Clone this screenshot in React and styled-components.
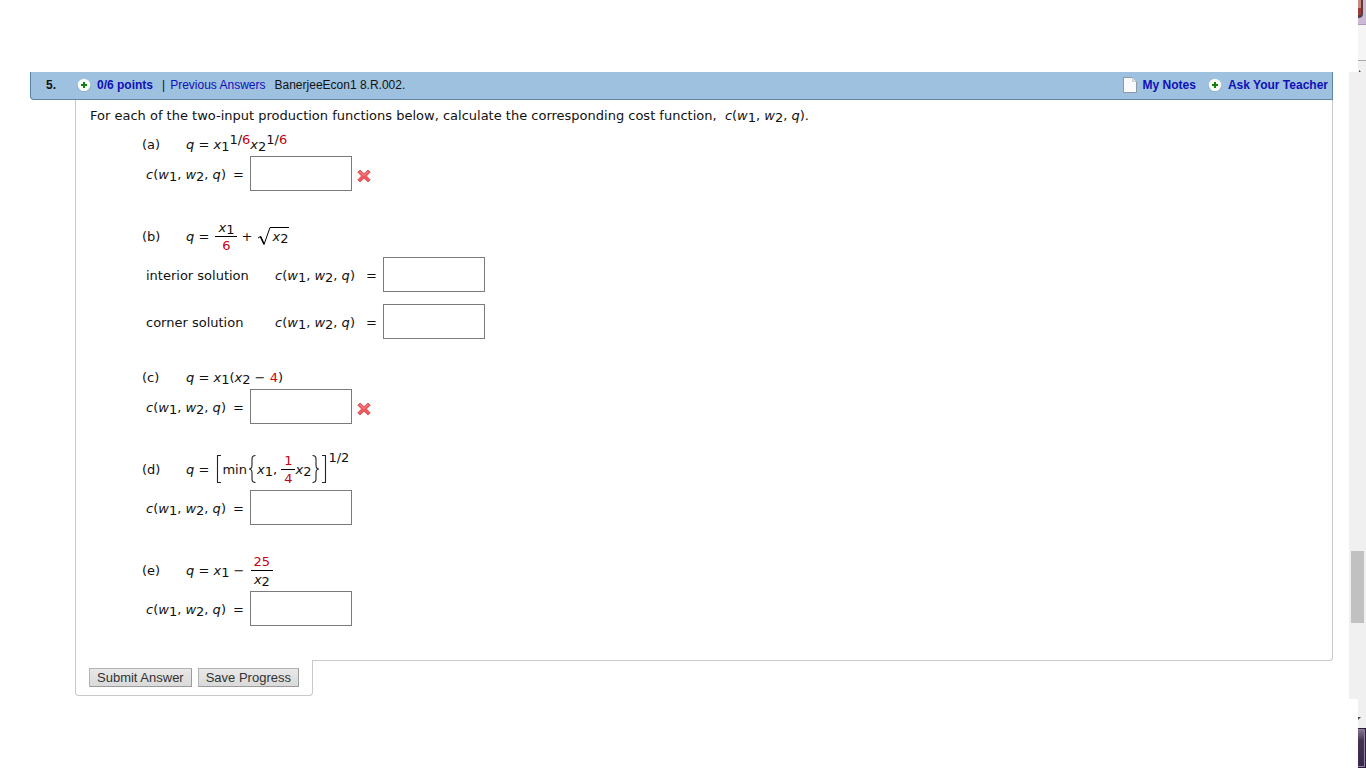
import { useState } from 'react';
import styled, { createGlobalStyle } from 'styled-components';

const GlobalStyle = createGlobalStyle`
  * {
    box-sizing: border-box;
  }
  body {
    margin: 0;
    background: #fff;
    color: #111;
    font-family: 'DejaVu Sans', Verdana, sans-serif;
    font-size: 13px;
  }
`;

const Page = styled.div`
  display: flex;
  flex-direction: column;
  min-height: 100vh;
`;

const EdgeRow = styled.div`
  display: flex;
  justify-content: flex-end;
  height: ${({ $height }) => $height}px;
`;

const Middle = styled.div`
  display: flex;
  gap: 16px;
  padding-left: 30px;
`;

const Question = styled.main`
  flex: 1;
  min-width: 0;
  padding-bottom: 3px;
`;

const Track = styled.div`
  width: 17px;
  padding: 479px 2px 0;
  background: #f0f0f0;
`;

const Thumb = styled.div`
  height: 72px;
  background: #c1c1c1;
`;

const Header = styled.header`
  display: flex;
  align-items: center;
  height: 28px;
  padding: 0 4px 2px 15px;
  background: #9dc1df;
  border: 1px solid #5d86a6;
  border-top: 0;
  border-bottom-left-radius: 4px;
  font-family: 'Liberation Sans', Arial, sans-serif;
  font-size: 12px;
  white-space: pre;
`;

const Number = styled.b`
  width: 31px;
`;

const HeaderLink = styled.a`
  color: #1010b8;
  font-weight: ${({ $bold }) => ($bold ? 'bold' : 'normal')};
  text-decoration: none;
`;

const HeaderItem = styled.span`
  display: flex;
  align-items: center;
  gap: 6px;
`;

const HeaderTools = styled.div`
  display: flex;
  gap: 12px;
  margin-left: auto;
`;

const Divider = styled.span`
  margin: 0 5px 0 9px;
`;

const Source = styled.span`
  margin-left: 9px;
`;

const Body = styled.section`
  margin-left: 45px;
  padding: 0 14px 34px;
  border: 1px solid #c8c8c8;
  border-top: 0;
  border-bottom-right-radius: 4px;
`;

const Prompt = styled.p`
  margin: 0;
  line-height: 32px;
`;

const Part = styled.div`
  margin: 0 0 26px 52px;
  &:last-child {
    margin-bottom: 0;
  }
`;

const Formula = styled.div`
  display: flex;
  align-items: center;
  height: ${({ $tall }) => ($tall ? 38 : 24)}px;
  margin-bottom: ${({ $tall }) => ($tall ? 2 : 0)}px;
  white-space: pre;
`;

const PartLabel = styled.span`
  width: 44px;
`;

const LeftSide = styled.span`
  padding-right: 2px;
`;

const Field = styled.div`
  display: flex;
  align-items: center;
  padding-left: 4px;
  & + & {
    margin-top: 12px;
  }
`;

const FieldLabel = styled.label`
  display: flex;
  padding-top: 2px;
  white-space: pre;
`;

const FieldName = styled.span`
  width: 129px;
`;

const FieldMath = styled.span`
  display: flex;
  justify-content: space-between;
  width: ${({ $wide }) => ($wide ? 102 : 98)}px;
  margin-right: 6px;
`;

const Answer = styled.input`
  width: 102px;
  height: 35px;
  margin-right: 5px;
  padding: 0 6px;
  border: 1px solid #7b7b7b;
  background: #fff;
  font: inherit;
`;

const Sub = styled.sub`
  font-size: 13px;
  line-height: 0;
  vertical-align: -2px;
`;

const Sup = styled.sup`
  font-size: 13px;
  line-height: 0;
  vertical-align: 5px;
`;

const Red = styled.span`
  color: #c9000e;
`;

const Fraction = styled.span`
  display: inline-flex;
  flex-direction: column;
  align-items: center;
  line-height: 17px;
`;

const Numerator = styled.span`
  padding: 0 3px;
  border-bottom: 1px solid #000;
`;

const Root = styled.span`
  display: inline-flex;
  align-items: center;
`;

const Radicand = styled.span`
  padding-left: 2px;
  border-top: 1px solid #000;
  line-height: 18px;
`;

const Exponent = styled.span`
  align-self: flex-start;
`;

const BracketIcon = styled.svg`
  margin: 0 1px;
`;

const Mark = styled.svg`
  margin-top: 4px;
`;

const Footer = styled.footer`
  display: flex;
  margin: -1px 0 0 45px;
`;

const Actions = styled.div`
  display: flex;
  gap: 6px;
  padding: 8px 13px;
  background: #fff;
  border: 1px solid #c8c8c8;
  border-top: 0;
  border-radius: 0 0 4px 4px;
`;

const Button = styled.button`
  height: 19px;
  padding: 0 7px;
  border: 1px solid #b4b4b4;
  border-right-color: #9c9c9c;
  border-bottom-color: #9c9c9c;
  background: linear-gradient(#e8e8e8, #dadada);
  color: #333;
  font-family: 'Liberation Sans', Arial, sans-serif;
  font-size: 13px;
  line-height: 17px;
`;

function PlusIcon() {
  return (
    <svg width="14" height="14" viewBox="0 0 14 14" aria-hidden="true">
      <circle cx="7" cy="7.5" r="6.5" fill="#7f9fb8" />
      <circle cx="7" cy="7" r="6.3" fill="#f7faf5" />
      <path d="M7 4v6M4 7h6" stroke="#118011" strokeWidth="2" />
    </svg>
  );
}

function NoteIcon() {
  return (
    <svg width="14" height="16" viewBox="0 0 14 16" aria-hidden="true">
      <path d="M.5.5h9l4 4v11H.5z" fill="#fafafa" stroke="#8d9aa5" />
      <path d="M9.5.5v4h4z" fill="#dfe5ea" stroke="#b5bfc8" strokeWidth=".7" />
    </svg>
  );
}

function WrongIcon() {
  return (
    <Mark width="14" height="14" viewBox="0 0 14 14" role="img" aria-label="Incorrect">
      <path
        d="M3 1 7 4.800 11 1l2.200 2.200L9.400 7l3.800 3.800L11 13 7 9.200 3 13 .8 10.800 4.600 7 .8 3.200z"
        fill="#f0565a"
        stroke="#d94a4c"
        strokeWidth=".8"
        strokeLinejoin="round"
      />
      <path d="M2.800 2.600 7 6.600l4.200-4" fill="none" stroke="#f88f8e" />
    </Mark>
  );
}

function Bracket({ d, width = 5 }) {
  return (
    <BracketIcon width={width} height="30" viewBox={`0 0 ${width} 30`} aria-hidden="true">
      <path d={d} fill="none" stroke="#222" strokeWidth="1.1" />
    </BracketIcon>
  );
}

const BRACE_LEFT = 'M7.500 1.500Q4 1.500 4 5V11Q4 15 1 15Q4 15 4 19V25Q4 28.500 7.500 28.500';
const BRACE_RIGHT = 'M.5 1.500Q4 1.500 4 5V11Q4 15 7 15Q4 15 4 19V25Q4 28.500 .5 28.500';

function X({ n }) {
  return <span><i>x</i><Sub>{n}</Sub></span>;
}

function Cost() {
  return <span><i>c</i>(<i>w</i><Sub>1</Sub>, <i>w</i><Sub>2</Sub>, <i>q</i>)</span>;
}

function AnswerField({ id, name, wrong }) {
  const [value, setValue] = useState('');

  return (
    <Field>
      <FieldLabel htmlFor={id}>
        {name && <FieldName>{name}</FieldName>}
        <FieldMath $wide={!!name}><Cost /><span>=</span></FieldMath>
      </FieldLabel>
      <Answer id={id} value={value} onChange={(e) => setValue(e.target.value)} />
      {wrong && <WrongIcon />}
    </Field>
  );
}

export default function App() {
  return (
    <>
      <GlobalStyle />
      <Page>
        <EdgeRow $height={72}>
          <svg width="8" height="72" viewBox="0 0 8 72" aria-hidden="true">
            <path d="M0 0h8v24H0z" fill="#cbb9d6" />
            <path d="M0 0h5v14q0 4-5 4z" fill="#5c3a40" />
            <path d="M0 0h3v12q0 3-3 3z" fill="#c98a80" />
            <path d="M0 8h3v4q0 3-3 3z" fill="#9c3a34" />
            <path d="M0 24h8v36H0z" fill="#f5f5f5" />
            <path d="M0 24h8v1H0z" fill="#a99bb5" />
            <path d="M0 60h8v1H0z" fill="#a9a9a9" />
            <path d="M0 61h8v11H0z" fill="#f0f0f0" />
            <path d="M1 70l2 2H1z" fill="#444" />
          </svg>
        </EdgeRow>
        <Middle>
          <Question>
            <Header>
              <Number>5.</Number>
              <HeaderItem>
                <PlusIcon />
                <HeaderLink href="#points" $bold>0/6 points</HeaderLink>
              </HeaderItem>
              <Divider>|</Divider>
              <HeaderLink href="#previous">Previous Answers</HeaderLink>
              <Source>BanerjeeEcon1 8.R.002.</Source>
              <HeaderTools>
                <HeaderItem>
                  <NoteIcon />
                  <HeaderLink href="#notes" $bold>My Notes</HeaderLink>
                </HeaderItem>
                <HeaderItem>
                  <PlusIcon />
                  <HeaderLink href="#ask" $bold>Ask Your Teacher</HeaderLink>
                </HeaderItem>
              </HeaderTools>
            </Header>

            <Body>
              <Prompt>
                For each of the two-input production functions below, calculate the corresponding cost function,&nbsp; <Cost />.
              </Prompt>

              <Part>
                <Formula>
                  <PartLabel>(a)</PartLabel>
                  <span>
                    <i>q</i> = <X n="1" /><Sup>1/<Red>6</Red></Sup><X n="2" /><Sup>1/<Red>6</Red></Sup>
                  </span>
                </Formula>
                <AnswerField id="cost-a" wrong />
              </Part>

              <Part>
                <Formula $tall>
                  <PartLabel>(b)</PartLabel>
                  <LeftSide><i>q</i> = </LeftSide>
                  <Fraction>
                    <Numerator><X n="1" /></Numerator>
                    <Red>6</Red>
                  </Fraction>
                  <span> + </span>
                  <Root>
                    <svg width="14" height="19" viewBox="0 0 14 19" aria-hidden="true">
                      <path d="M1 11l2.500-1.500L7 17.500 13 .5h1" fill="none" stroke="#000" />
                      <path d="M3.500 9.500L7 17" stroke="#000" strokeWidth="1.600" />
                    </svg>
                    <Radicand><X n="2" /></Radicand>
                  </Root>
                </Formula>
                <AnswerField id="cost-interior" name="interior solution" />
                <AnswerField id="cost-corner" name="corner solution" />
              </Part>

              <Part>
                <Formula>
                  <PartLabel>(c)</PartLabel>
                  <span><i>q</i> = <X n="1" />(<X n="2" /> − <Red>4</Red>)</span>
                </Formula>
                <AnswerField id="cost-c" wrong />
              </Part>

              <Part>
                <Formula $tall>
                  <PartLabel>(d)</PartLabel>
                  <LeftSide><i>q</i> = </LeftSide>
                  <Bracket d="M5 1.500H1.500V28.500H5" />
                  <span>min</span>
                  <Bracket d={BRACE_LEFT} width={8} />
                  <span><X n="1" />, </span>
                  <Fraction>
                    <Numerator><Red>1</Red></Numerator>
                    <Red>4</Red>
                  </Fraction>
                  <X n="2" />
                  <Bracket d={BRACE_RIGHT} width={8} />
                  <Bracket d="M0 1.500H3.500V28.500H0" />
                  <Exponent>1/2</Exponent>
                </Formula>
                <AnswerField id="cost-d" />
              </Part>

              <Part>
                <Formula $tall>
                  <PartLabel>(e)</PartLabel>
                  <LeftSide><i>q</i> = <X n="1" /> − </LeftSide>
                  <Fraction>
                    <Numerator><Red>25</Red></Numerator>
                    <X n="2" />
                  </Fraction>
                </Formula>
                <AnswerField id="cost-e" />
              </Part>
            </Body>

            <Footer>
              <Actions>
                <Button type="button">Submit Answer</Button>
                <Button type="button">Save Progress</Button>
              </Actions>
            </Footer>
          </Question>
          <Track>
            <Thumb />
          </Track>
        </Middle>
        <EdgeRow $height={69}>
          <svg width="8" height="69" viewBox="0 0 8 69" aria-hidden="true">
            <defs>
              <linearGradient id="bar" x1="0" y1="0" x2="0" y2="1">
                <stop offset="0" stopColor="#82758f" />
                <stop offset=".3" stopColor="#43324f" />
                <stop offset="1" stopColor="#37284c" />
              </linearGradient>
            </defs>
            <path d="M0 0h8v29H0z" fill="#f0f0f0" />
            <path d="M0 18h3l-3 3z" fill="#444" />
            <path d="M0 29h8v40H0z" fill="#2b1d3a" />
            <path d="M0 31h6v36H0z" fill="url(#bar)" />
            <path d="M0 30.500h6.500V67.500H0" fill="none" stroke="#8f83a0" />
          </svg>
        </EdgeRow>
      </Page>
    </>
  );
}
